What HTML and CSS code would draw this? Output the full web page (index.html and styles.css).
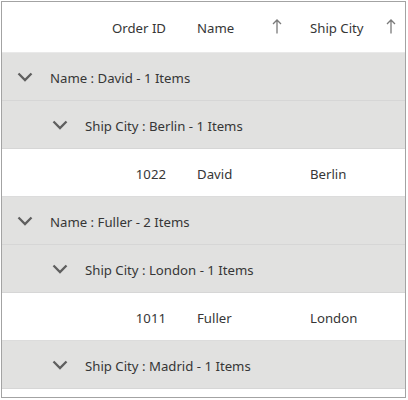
FILE: index.html
```html
<!DOCTYPE html>
<html>
<head>
<meta charset="utf-8">
<link rel="stylesheet" href="styles.css">
</head>
<body>
<div class="grid">
  <div class="header">
    <div class="indent"></div>
    <div class="cell id">Order ID</div>
    <div class="cell name">Name<svg class="sort" viewBox="0 0 10 15"><path d="M5 14.5V1M1 5L5 1L9 5"/></svg></div>
    <div class="cell city">Ship City<svg class="sort" viewBox="0 0 10 15"><path d="M5 14.5V1M1 5L5 1L9 5"/></svg></div>
  </div>
  <div class="group l1"><svg class="chev" viewBox="0 0 16 10"><path d="M1.5 1.5L8 8L14.5 1.5"/></svg><span>Name : David - 1 Items</span></div>
  <div class="group l2"><svg class="chev" viewBox="0 0 16 10"><path d="M1.5 1.5L8 8L14.5 1.5"/></svg><span>Ship City : Berlin - 1 Items</span></div>
  <div class="row">
    <div class="indent"></div>
    <div class="cell id">1022</div>
    <div class="cell name">David</div>
    <div class="cell city">Berlin</div>
  </div>
  <div class="group l1"><svg class="chev" viewBox="0 0 16 10"><path d="M1.5 1.5L8 8L14.5 1.5"/></svg><span>Name : Fuller - 2 Items</span></div>
  <div class="group l2"><svg class="chev" viewBox="0 0 16 10"><path d="M1.5 1.5L8 8L14.5 1.5"/></svg><span>Ship City : London - 1 Items</span></div>
  <div class="row">
    <div class="indent"></div>
    <div class="cell id">1011</div>
    <div class="cell name">Fuller</div>
    <div class="cell city">London</div>
  </div>
  <div class="group l2"><svg class="chev" viewBox="0 0 16 10"><path d="M1.5 1.5L8 8L14.5 1.5"/></svg><span>Ship City : Madrid - 1 Items</span></div>
</div>
</body>
</html>
```
FILE: styles.css
```css
html, body {
  margin: 0;
  padding: 0;
  background: #ffffff;
}
body {
  padding: 1px;
}
.grid {
  box-sizing: border-box;
  width: 405px;
  height: 397px;
  border: 1px solid #a3a3a3;
  overflow: hidden;
  font-family: "Segoe UI", "Noto Sans", "Open Sans", sans-serif;
  font-size: 13.2px;
  color: #363636;
  background: #ffffff;
}
.header {
  display: flex;
  height: 50px;
  border-bottom: 1px solid #e9e9e9;
  align-items: center;
}
.row {
  box-sizing: border-box;
  display: flex;
  height: 48px;
  padding-top: 2px;
  border-bottom: 1px solid #dcdcdc;
  align-items: center;
  background: #ffffff;
}
.indent {
  width: 70px;
  flex: none;
}
.cell {
  box-sizing: border-box;
  display: flex;
  align-items: center;
  height: 100%;
}
.id {
  width: 113px;
  justify-content: flex-end;
  padding-right: 19px;
}
.name {
  width: 113px;
  padding-left: 12px;
  padding-right: 16px;
}
.city {
  flex: 1;
  padding-left: 12px;
  padding-right: 9px;
}
.header .name, .header .city {
  justify-content: space-between;
}
.header .cell {
  padding-top: 1px;
}
.header .name .sort, .header .city .sort {
  margin-top: -2px;
}
.sort {
  width: 10px;
  height: 15px;
  fill: none;
  stroke: #7a7a7a;
  stroke-width: 1.3;
}
.group {
  box-sizing: border-box;
  display: flex;
  align-items: center;
  height: 48px;
  padding-top: 2px;
  border-bottom: 1px solid #d6d6d6;
  background: #e1e1e0;
}
.group.l1 {
  padding-left: 15px;
}
.group.l2 {
  padding-left: 50px;
}
.chev {
  width: 16px;
  height: 10px;
  margin-right: 17px;
  margin-top: -1px;
  fill: none;
  stroke: #5f5f5f;
  stroke-width: 2.3;
  flex: none;
}
```
